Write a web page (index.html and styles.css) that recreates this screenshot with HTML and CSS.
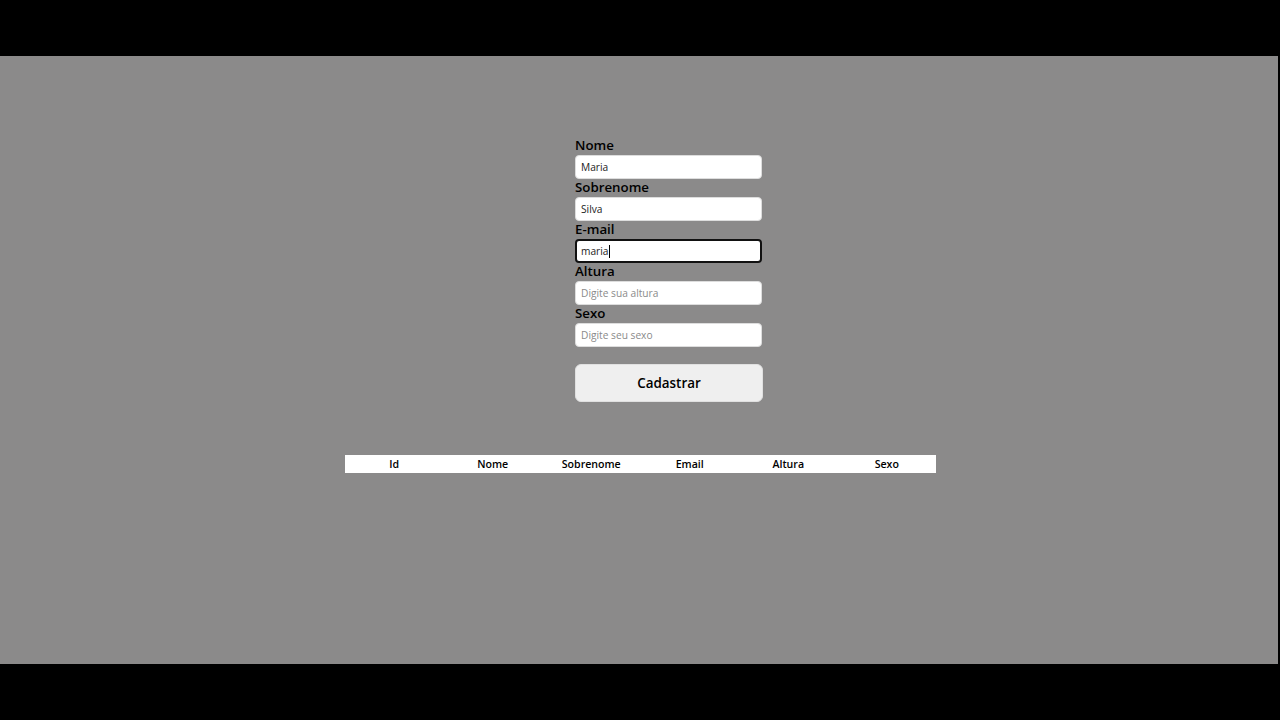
FILE: index.html
```html
<!DOCTYPE html>
<html lang="pt">
<head>
<meta charset="utf-8">
<title>Cadastro</title>
<link rel="stylesheet" href="styles.css">
</head>
<body>
<div class="bar"></div>
<main class="stage">
  <form class="form">
    <label class="label" for="nome">Nome</label>
    <input class="field" id="nome" type="text" value="Maria">
    <label class="label" for="sobrenome">Sobrenome</label>
    <input class="field" id="sobrenome" type="text" value="Silva">
    <label class="label" for="email">E-mail</label>
    <div class="field focused">maria<span class="caret"></span></div>
    <label class="label" for="altura">Altura</label>
    <input class="field" id="altura" type="text" placeholder="Digite sua altura">
    <label class="label" for="sexo">Sexo</label>
    <input class="field" id="sexo" type="text" placeholder="Digite seu sexo">
    <button class="submit" type="button">Cadastrar</button>
  </form>
  <table class="table">
    <thead>
      <tr><th>Id</th><th>Nome</th><th>Sobrenome</th><th>Email</th><th>Altura</th><th>Sexo</th></tr>
    </thead>
  </table>
</main>
<div class="bar"></div>
</body>
</html>
```
FILE: styles.css
```css
html, body {
  margin: 0;
  padding: 0;
  background: #000;
  font-family: "Open Sans", "Noto Sans", sans-serif;
}
.bar {
  height: 56px;
  background: #000;
}
.stage {
  height: 608px;
  width: 1278px;
  background: #8b8a8a;
  box-sizing: border-box;
  padding-top: 81px;
  display: flex;
  flex-direction: column;
}
.form {
  margin-left: 575px;
  width: 188px;
  display: flex;
  flex-direction: column;
}
.label {
  font-size: 13.3px;
  font-weight: 600;
  line-height: 17px;
  height: 18px;
  color: #000;
}
.field {
  box-sizing: border-box;
  width: 187px;
  height: 24px;
  border: 1px solid #ddd;
  border-radius: 4px;
  background: #fff;
  padding: 0 5px;
  font-family: "Open Sans", "Noto Sans", sans-serif;
  font-size: 10.2px;
  color: #222;
  outline: none;
  margin: 0;
}
.field::placeholder {
  color: #8a8a8a;
}
.focused {
  border: 2px solid #111;
  padding: 0 4px;
  line-height: 20px;
  display: flex;
  align-items: center;
}
.caret {
  display: inline-block;
  width: 1px;
  height: 13px;
  background: #000;
}
.submit {
  margin-top: 17px;
  width: 188px;
  height: 38px;
  border: 1px solid #e0e0e0;
  border-radius: 6px;
  background: #efefef;
  font-family: "Open Sans", "Noto Sans", sans-serif;
  font-size: 13.4px;
  font-weight: 600;
  color: #000;
  padding: 0;
}
.table {
  margin-top: 53px;
  margin-left: 345px;
  width: 591px;
  background: #fff;
  border-collapse: collapse;
  table-layout: fixed;
}
.table th {
  height: 18px;
  padding: 1px 0 0 0;
  box-sizing: border-box;
  font-size: 10.6px;
  font-weight: 600;
  line-height: 17px;
  text-align: center;
  color: #000;
}
```
